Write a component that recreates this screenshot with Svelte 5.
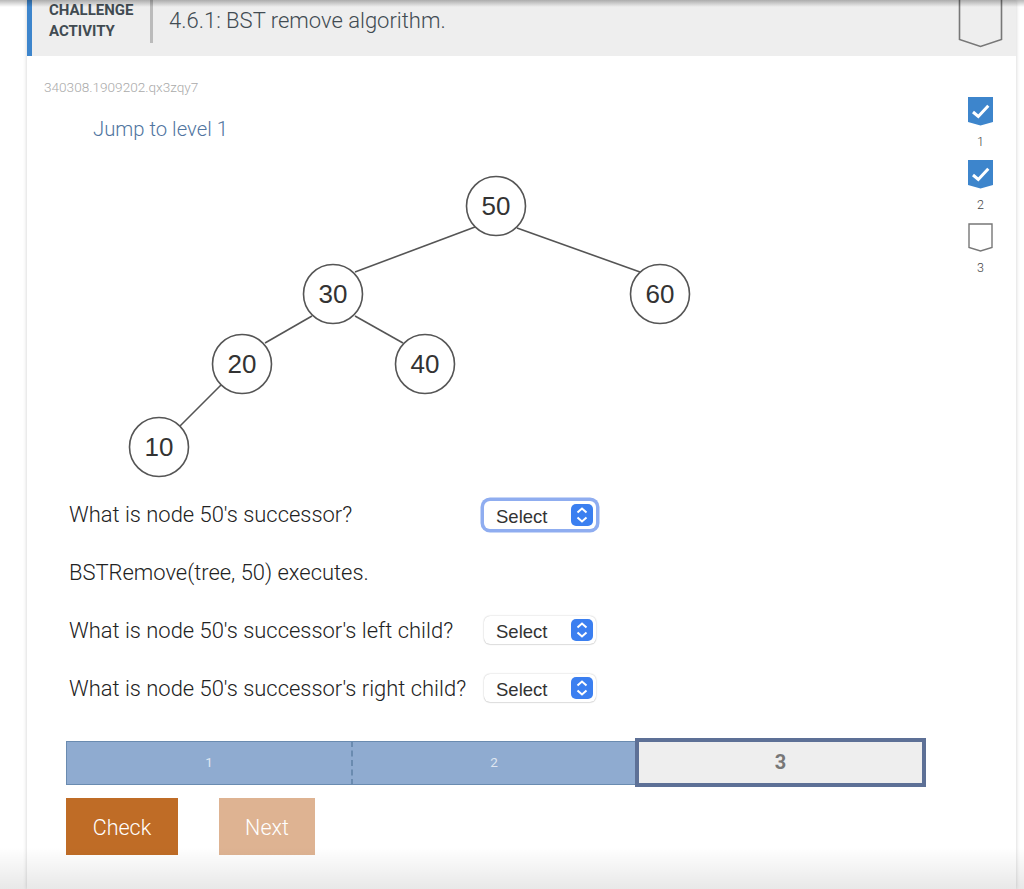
<script lang="ts">
  const nodes = [
    { label: 50, x: 496, y: 206 },
    { label: 30, x: 333, y: 294 },
    { label: 60, x: 660, y: 294 },
    { label: 20, x: 242, y: 364 },
    { label: 40, x: 425, y: 364 },
    { label: 10, x: 159, y: 447 }
  ];
  // the lines in the drawing don't aim at the circle centres, so they get their own ends
  const edges = [
    [475, 227, 355, 272],
    [517, 228, 640, 272],
    [312, 316, 265, 343],
    [355, 316, 403, 343],
    [221, 385, 180, 426]
  ];

  const levels = [
    { n: 1, done: true },
    { n: 2, done: true },
    { n: 3, done: false }
  ];

  const questions = [
    { text: "What is node 50's successor?", select: true, focused: true },
    { text: 'BSTRemove(tree, 50) executes.', select: false, focused: false },
    { text: "What is node 50's successor's left child?", select: true, focused: false },
    { text: "What is node 50's successor's right child?", select: true, focused: false }
  ];
</script>

<div class="page">
  <div class="card">
    <header class="head">
      <div class="kind">CHALLENGE<br />ACTIVITY</div>
      <h1 class="title">4.6.1: BST remove algorithm.</h1>
      <svg class="bookmark" width="45" height="48" viewBox="0 0 45 48">
        <path d="M1.5 -2V39.5L22.5 46.5L43.5 39.5V-2" fill="none" stroke="#777" stroke-width="1.6" />
      </svg>
    </header>

    <div class="body">
      <main class="main">
        <div class="code">340308.1909202.qx3zqy7</div>
        <div class="jump">Jump to level 1</div>

        <svg class="tree" width="700" height="310" viewBox="44 170 700 310">
          {#each edges as [x1, y1, x2, y2]}
            <line {x1} {y1} {x2} {y2} stroke="#555" stroke-width="1.6" />
          {/each}
          {#each nodes as node}
            <circle cx={node.x} cy={node.y} r="29.5" fill="#fff" stroke="#555" stroke-width="1.6" />
            <text x={node.x} y={node.y + 9} text-anchor="middle" class="node-text">{node.label}</text>
          {/each}
        </svg>

        <div class="questions">
          {#each questions as q}
            <div class="question">{q.text}</div>
            {#if q.select}
              <div class="select" class:focused={q.focused}>
                <select aria-label={q.text}>
                  <option>Select</option>
                </select>
                <svg class="arrows" width="22" height="22" viewBox="0 0 22 22">
                  <rect width="22" height="22" rx="5" fill="#3b7ff0" />
                  <path d="M6.5 8.5L11 4.5L15.5 8.5M6.5 13.5L11 17.5L15.5 13.5" fill="none" stroke="#fff" stroke-width="2" />
                </svg>
              </div>
            {:else}
              <div></div>
            {/if}
          {/each}
        </div>

        <div class="progress">
          <div class="seg done first">1</div>
          <div class="seg done second">2</div>
          <div class="seg current">3</div>
        </div>

        <div class="actions">
          <button class="btn check">Check</button>
          <button class="btn next">Next</button>
        </div>
      </main>

      <aside class="levels">
        {#each levels as level}
          <div class="level">
            <svg width="25" height="29" viewBox="0 0 25 29">
              {#if level.done}
                <path d="M0 0H25V25L12.5 28.5L0 25Z" fill="#3d85cc" />
                <path d="M5 15L10.3 19.5L20.3 8.7" fill="none" stroke="#fff" stroke-width="3" />
              {:else}
                <path d="M1 1H24V24.5L12.5 28L1 24.5Z" fill="#fff" stroke="#777" stroke-width="1.4" />
              {/if}
            </svg>
            <span class="level-num">{level.n}</span>
          </div>
        {/each}
      </aside>
    </div>
  </div>

  <div class="shade-top"></div>
  <div class="shade-bottom"></div>
</div>

<style>
  :global(body) {
    background: #fff;
  }

  .page {
    position: relative;
    height: 889px;
    overflow: hidden;
    padding-left: 27px;
    padding-right: 8px;
    font-family: Roboto, 'Liberation Sans', sans-serif;
  }

  .card {
    height: 889px;
    background: #fff;
    box-shadow: 0 0 4px rgba(0, 0, 0, 0.2);
  }

  .head {
    display: flex;
    height: 56px;
    background: #eee;
    border-left: 5px solid #3d85cc;
  }

  .kind {
    width: 100px;
    height: 43px;
    margin-left: 17px;
    padding-right: 1px;
    border-right: 3px solid #bbb;
    font-size: 15px;
    font-weight: 700;
    line-height: 20.5px;
    color: #414b52;
  }

  .title {
    margin: 5px 0 0 16px;
    font-size: 22px;
    font-weight: 300;
    line-height: 32px;
    color: #414b52;
  }

  .bookmark {
    margin-left: auto;
    margin-right: 13px;
  }

  .body {
    display: flex;
  }

  .main {
    flex: 1;
    padding: 22px 0 0 17px;
  }

  .code {
    font-size: 13.6px;
    font-weight: 300;
    line-height: 18px;
    color: #aaa;
  }

  .jump {
    margin: 21px 0 0 49px;
    font-size: 20.3px;
    font-weight: 300;
    line-height: 24px;
    color: #50759f;
  }

  .tree {
    display: block;
    margin-top: 29px;
  }

  .node-text {
    font-family: 'Liberation Sans', sans-serif;
    font-size: 26px;
    fill: #333;
  }

  .questions {
    display: grid;
    grid-template-columns: 415px 112px;
    row-gap: 30px;
    margin: 21px 0 0 25px;
    align-items: center;
  }

  .question {
    font-size: 21.95px;
    font-weight: 300;
    line-height: 28px;
    color: #222;
  }

  .select {
    position: relative;
    height: 28px;
    margin-top: -2px;
    border-radius: 6px;
    background: #fff;
    box-shadow: 0 0 1.5px rgba(0, 0, 0, 0.3), 0 1px 1px rgba(0, 0, 0, 0.08);
  }

  .select.focused {
    margin-top: 0;
    box-shadow: 0 0 0 3.5px #8fadf0;
  }

  .select select {
    appearance: none;
    width: 100%;
    height: 100%;
    padding: 2px 0 0 12px;
    border: none;
    background: transparent;
    font-family: 'Liberation Sans', sans-serif;
    font-size: 18.5px;
    color: #333;
  }

  .arrows {
    position: absolute;
    top: 3px;
    right: 3px;
  }

  .progress {
    display: flex;
    align-items: center;
    width: 860px;
    height: 49px;
    margin: 35px 0 0 22px;
  }

  .seg {
    display: flex;
    align-items: center;
    justify-content: center;
    box-sizing: border-box;
    padding-bottom: 2px;
  }

  .seg.done {
    height: 44px;
    background: #8fabd0;
    border: 1px solid #6a8bb0;
    border-left: none;
    border-right: none;
    font-size: 13.5px;
    font-weight: 400;
    color: #dfe6f0;
  }

  .seg.first {
    width: 287px;
    border-left: 1px solid #6a8bb0;
    border-right: 2px dashed #6a8bb0;
  }

  .seg.second {
    width: 282px;
  }

  .seg.current {
    width: 291px;
    height: 49px;
    background: #eee;
    border: 4px solid #5d7096;
    font-size: 20px;
    font-weight: 700;
    color: #777;
  }

  .actions {
    display: flex;
    gap: 41px;
    margin: 11px 0 0 22px;
  }

  .btn {
    height: 57px;
    padding: 1px 0 0;
    border: none;
    font-family: Roboto, sans-serif;
    font-weight: 300;
    font-size: 21.5px;
    color: #fff;
  }

  .btn.check {
    width: 112px;
    background: #bf6c26;
  }

  .btn.next {
    width: 96px;
    background: #deb392;
  }

  .levels {
    display: flex;
    flex-direction: column;
    gap: 6px;
    margin-right: 23px;
    padding-top: 41px;
  }

  .level {
    display: flex;
    flex-direction: column;
    align-items: center;
    height: 57px;
    gap: 7px;
  }

  .level svg {
    display: block;
  }

  .level-num {
    font-size: 12.5px;
    font-weight: 300;
    line-height: 18px;
    color: #444;
  }

  .shade-top {
    position: absolute;
    top: 0;
    left: 0;
    right: 0;
    height: 7px;
    background: linear-gradient(rgba(0, 0, 0, 0.28), rgba(0, 0, 0, 0));
  }

  .shade-bottom {
    position: absolute;
    bottom: 0;
    left: 0;
    right: 0;
    height: 42px;
    background: linear-gradient(rgba(0, 0, 0, 0), rgba(0, 0, 0, 0.09));
  }
</style>
